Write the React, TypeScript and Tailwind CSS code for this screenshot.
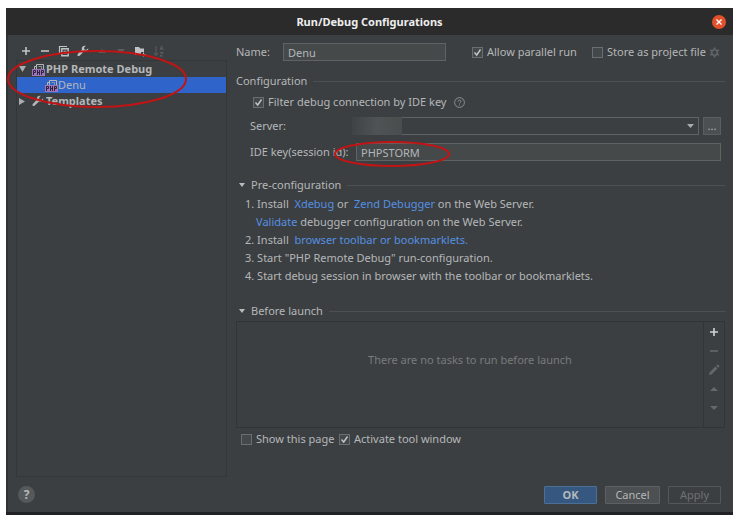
import React from "react";

const PlusIcon = () => (
  <svg width="12" height="12" viewBox="0 0 12 12" stroke="currentColor" strokeWidth="1.6" fill="none">
    <path d="M6 2v8M2 6h8" />
  </svg>
);

const MinusIcon = () => (
  <svg width="12" height="12" viewBox="0 0 12 12" stroke="currentColor" strokeWidth="1.6" fill="none">
    <path d="M2 6h8" />
  </svg>
);

const CopyIcon = () => (
  <svg width="12" height="12" viewBox="0 0 12 12" stroke="currentColor" fill="none">
    <path d="M1.5 9V1.5H9" strokeWidth="1.2" />
    <path d="M3.8 3.8h6.4v7H3.8z" strokeWidth="1.4" />
    <path d="M5.5 6.2h3M5.5 8.4h3" />
  </svg>
);

const WrenchIcon = () => (
  <svg width="12" height="12" viewBox="0 0 12 12" fill="currentColor">
    <path d="M11.2 3.2 9.3 5 7.4 4.6 7 2.7 8.8.8C7.3.3 5.6 1 5 2.5c-.3.7-.3 1.4 0 2.1L.8 8.9c-.5.6-.5 1.3 0 1.8.6.5 1.3.5 1.8 0l4.3-4.3c.7.3 1.4.2 2.1 0 1.6-.5 2.5-1.9 2.2-3.2z" />
  </svg>
);

const UpIcon = () => (
  <svg width="12" height="12" viewBox="0 0 12 12" fill="currentColor">
    <path d="M2 8h8L6 4z" />
  </svg>
);

const DownIcon = () => (
  <svg width="12" height="12" viewBox="0 0 12 12" fill="currentColor">
    <path d="M2 4h8L6 8z" />
  </svg>
);

const FolderIcon = () => (
  <svg width="12" height="12" viewBox="0 0 12 12">
    <path d="M1 2h4l1.2 1.5H10V7H7v3H1z" fill="currentColor" />
    <path d="M9.500 7.500v4M7.500 9.500h4" stroke="currentColor" />
  </svg>
);

const SortIcon = () => (
  <svg width="12" height="12" viewBox="0 0 12 12" fill="none" stroke="currentColor">
    <path d="M3 1v9M1 8l2 2.5L5 8" />
    <path d="M7 5l1.5-4L10 5M7.5 3.8h2M7 7.5h3L7 11h3" />
  </svg>
);

const PencilIcon = () => (
  <svg width="12" height="12" viewBox="0 0 12 12" fill="currentColor">
    <path d="M1 11l.6-2.6 5.8-5.8 2 2L3.6 10.4zM8.2 1.8 9.3.8c.3-.3.6-.3.9 0l1 1c.3.3.3.6 0 .9l-1 1.1z" />
  </svg>
);

const GearIcon = () => (
  <svg width="11" height="11" viewBox="0 0 12 12" fill="none" stroke="currentColor">
    <circle cx="6" cy="6" r="3" strokeWidth="1.8" />
    <path d="M6 .5v2M6 9.500v2M1.200 3.200l1.800 1M9 7.800l1.800 1M1.200 8.800 3 7.800M9 4.200l1.800-1" strokeWidth="2" />
  </svg>
);

const PhpIcon = () => (
  <svg className="shrink-0" width="13" height="13" viewBox="0 0 13 13" fill="none">
    <path d="M4.5 6V1.5h7V6" stroke="#b4b8bb" />
    <path d="M6.5 3.5h3V6" stroke="#8e9396" />
    <path d="M2.500 6V3.500h2" stroke="#b4b8bb" />
    <path d="M0 6h13v7H0z" fill="#9a78b8" />
    <path d="M1.500 12V7.500h2v2h-2M5.500 7v5M7.500 7v5M5.500 9.500h2M9.500 12V7.500h2v2h-2" stroke="#35203f" />
  </svg>
);

const CloseIcon = () => (
  <svg width="8" height="8" viewBox="0 0 8 8" stroke="white" strokeWidth="1.4">
    <path d="m1.500 1.500 5 5M6.500 1.500l-5 5" />
  </svg>
);

function Check({ label, checked = false, className = "" }: { label: string; checked?: boolean; className?: string }) {
  return (
    <label className={`flex shrink-0 items-center gap-1 whitespace-nowrap ${className}`}>
      <span className="grid size-[11px] place-items-center">
        <input
          type="checkbox"
          defaultChecked={checked}
          className="peer col-start-1 row-start-1 size-[11px] appearance-none border border-[#6b6e70] bg-[#43494a]"
        />
        <svg
          className="pointer-events-none col-start-1 row-start-1 hidden peer-checked:block"
          width="9" height="9" viewBox="0 0 9 9" fill="none" stroke="#c3c6c8" strokeWidth="1.4"
        >
          <path d="m1.500 4.500 2.200 2.500L7.500 1.500" />
        </svg>
      </span>
      {label}
    </label>
  );
}

function Section({ title, arrow = false }: { title: string; arrow?: boolean }) {
  return (
    <div className="flex h-4 items-center">
      {arrow && (
        <svg className="mr-[6px] ml-[3px]" width="6" height="4" viewBox="0 0 6 4" fill="#b9bcbe">
          <path d="M0 0h6L3 4z" />
        </svg>
      )}
      <h2 className="whitespace-nowrap">{title}</h2>
      <div className="ml-[6px] h-px flex-1 bg-[#4d5052]" />
    </div>
  );
}

function TreeArrow({ open = false }: { open?: boolean }) {
  return (
    <svg width="7" height="7" viewBox="0 0 7 7" fill="#a9acae">
      <path d={open ? "M0 0h7L3.500 6z" : "M0 0v7l6-3.500z"} />
    </svg>
  );
}

function Link({ children }: { children: React.ReactNode }) {
  return <a href="#" className="text-[#5490e3]">{children}</a>;
}

const tools = [
  { name: "Add", icon: <PlusIcon />, on: true },
  { name: "Remove", icon: <MinusIcon />, on: true },
  { name: "Copy", icon: <CopyIcon />, on: true },
  { name: "Edit templates", icon: <WrenchIcon />, on: true },
  { name: "Move up", icon: <UpIcon />, on: false },
  { name: "Move down", icon: <DownIcon />, on: false },
  { name: "New folder", icon: <FolderIcon />, on: true },
  { name: "Sort", icon: <SortIcon />, on: false },
];

const taskTools = [
  { name: "Add task", icon: <PlusIcon />, on: true },
  { name: "Remove task", icon: <MinusIcon />, on: false },
  { name: "Edit task", icon: <PencilIcon />, on: false },
  { name: "Move task up", icon: <UpIcon />, on: false },
  { name: "Move task down", icon: <DownIcon />, on: false },
];

function Sidebar() {
  return (
    <aside className="relative flex w-[211px] shrink-0 flex-col">
      <div className="mb-px flex h-4 items-center">
        {tools.map((t) => (
          <button
            key={t.name}
            aria-label={t.name}
            disabled={!t.on}
            className="flex w-[19px] justify-center text-[#c0c3c5] disabled:text-[#5b5f61]"
          >
            {t.icon}
          </button>
        ))}
      </div>
      <ul className="flex-1 border border-[#343739]">
        <li className="flex h-4 items-center pl-[2px] font-bold">
          <TreeArrow open />
          <span className="mr-px ml-[6px]"><PhpIcon /></span>
          PHP Remote Debug
        </li>
        <li className="flex h-4 items-center bg-[#2f65ca] pl-7">
          <PhpIcon />
          Denu
        </li>
        <li className="flex h-4 items-center pl-[2px] font-bold">
          <TreeArrow />
          <span className="mr-[2px] ml-[6px]"><WrenchIcon /></span>
          Templates
        </li>
      </ul>
      <svg className="pointer-events-none absolute top-[6px] -left-[10px]" width="182" height="60" viewBox="0 0 182 60" fill="none">
        <ellipse cx="91" cy="30" rx="89" ry="28" stroke="#c21414" strokeWidth="2" />
      </svg>
    </aside>
  );
}

export default function App() {
  return (
    <div className="flex min-h-screen flex-col bg-white pt-2 pr-[3px] pb-[5px] pl-[6px] font-['Noto_Sans','Open_Sans',sans-serif] text-[11px] leading-4 text-[#b4b7b9]">
      <div className="flex flex-1 flex-col border-b-[3px] border-[#202225] bg-[#3c3f41]">
        <header className="grid h-[27px] grid-cols-[1fr_auto_1fr] items-center bg-[#2b2b2b]">
          <h1 className="col-start-2 font-bold text-[#eeeeee]">Run/Debug Configurations</h1>
          <button aria-label="Close" className="col-start-3 mr-[7px] flex size-[14px] items-center justify-center justify-self-end rounded-full bg-[#e2512b]">
            <CloseIcon />
          </button>
        </header>

        <div className="flex flex-1 flex-col border-l-2 border-[#303335] pr-2 pl-2">
          <div className="flex flex-1 pt-2">
            <Sidebar />
            <main className="ml-[9px] flex min-w-0 flex-1 flex-col">
              <div className="flex h-[18px] items-center">
                <label htmlFor="name" className="w-[47px] shrink-0">Name:</label>
                <input id="name" defaultValue="Denu" className="h-[18px] min-w-0 flex-1 border border-[#5f6364] bg-[#45494a] px-1" />
                <Check label="Allow parallel run" checked className="ml-[26px] w-[120px]" />
                <Check label="Store as project file" className="w-[117px]" />
                <span className="mr-[5px] text-[#606466]"><GearIcon /></span>
              </div>

              <div className="mt-3"><Section title="Configuration" /></div>

              <div className="mt-[5px] flex h-4 items-center gap-2 pl-[17px]">
                <Check label="Filter debug connection by IDE key" checked />
                <svg width="11" height="11" viewBox="0 0 11 11" fill="none" stroke="#8b8f91">
                  <circle cx="5.500" cy="5.500" r="4.900" />
                  <path d="M4 4.500c0-2 3-2 3 0 0 1-1.500 1-1.500 2M5.500 7.500v1" />
                </svg>
              </div>

              <div className="mt-[7px] flex h-[18px] items-center pr-1 pl-[14px]">
                <label htmlFor="server" className="w-[102px] shrink-0">Server:</label>
                <div className="grid flex-1 items-center">
                  <select id="server" className="col-start-1 row-start-1 h-[18px] w-full appearance-none border border-[#5f6364] bg-[#3c3f41]">
                    <option aria-label="Selected server" />
                  </select>
                  <span className="pointer-events-none col-start-1 row-start-1 h-[18px] w-[50px] bg-linear-to-r from-[#404345] via-[#505354] to-[#4a4d4e]" />
                  <svg className="pointer-events-none col-start-1 row-start-1 mr-[5px] justify-self-end" width="7" height="4" viewBox="0 0 7 4" fill="#a9acae">
                    <path d="M0 0h7L3.500 4z" />
                  </svg>
                </div>
                <button className="ml-1 flex h-[18px] w-[18px] items-center justify-center border border-[#5a5e60] bg-[#4c5052]">...</button>
              </div>

              <div className="relative mt-2 flex h-[18px] items-center pr-1 pl-[14px]">
                <label htmlFor="key" className="w-[106px] shrink-0 whitespace-nowrap">IDE key(session id):</label>
                <input id="key" defaultValue="PHPSTORM" className="h-[18px] min-w-0 flex-1 border border-[#5f6364] bg-[#45494a] px-1" />
                <svg className="pointer-events-none absolute -top-[3px] left-[97px]" width="118" height="28" viewBox="0 0 118 28" fill="none">
                  <ellipse cx="59" cy="14" rx="57" ry="12" stroke="#c21414" strokeWidth="2" />
                </svg>
              </div>

              <div className="mt-4"><Section title="Pre-configuration" arrow /></div>
              <ol className="mt-[2px] pl-[9px] leading-[18px] whitespace-pre">
                <li>1. Install  <Link>Xdebug</Link> or  <Link>Zend Debugger</Link> on the Web Server.</li>
                <li className="pl-[11px]"><Link>Validate</Link> debugger configuration on the Web Server.</li>
                <li>2. Install  <Link>browser toolbar or bookmarklets.</Link></li>
                <li>3. Start "PHP Remote Debug" run-configuration.</li>
                <li>4. Start debug session in browser with the toolbar or bookmarklets.</li>
              </ol>

              <div className="mt-[18px]"><Section title="Before launch" arrow /></div>
              <div className="mt-[2px] flex h-[107px] border border-[#323537]">
                <p className="flex-1 pt-[30px] text-center text-[#787b7d]">There are no tasks to run before launch</p>
                <div className="flex w-[21px] flex-col border-l border-[#323537]">
                  {taskTools.map((t) => (
                    <button
                      key={t.name}
                      aria-label={t.name}
                      disabled={!t.on}
                      className="flex h-[19px] items-center justify-center text-[#d0d3d5] disabled:text-[#64686a]"
                    >
                      {t.icon}
                    </button>
                  ))}
                </div>
              </div>

              <div className="mt-[3px] flex h-4 items-center pl-[5px]">
                <Check label="Show this page" className="w-[98px]" />
                <Check label="Activate tool window" checked />
              </div>
            </main>
          </div>

          <footer className="flex h-[35px] items-center gap-2 pr-1">
            <button aria-label="Help" className="mr-auto ml-[2px] size-[17px] rounded-full bg-[#56595b] text-[12px] leading-[17px] font-bold">?</button>
            <button className="h-[18px] w-[53px] rounded-[1px] border border-[#4a7096] bg-[#365880] leading-4 font-bold">OK</button>
            <button className="h-[18px] w-[55px] rounded-[1px] border border-[#5e6163] bg-[#4c5052] leading-4">Cancel</button>
            <button disabled className="h-[18px] w-[53px] rounded-[1px] border border-[#55585a] leading-4 text-[#6e7173]">Apply</button>
          </footer>
        </div>
      </div>
    </div>
  );
}
